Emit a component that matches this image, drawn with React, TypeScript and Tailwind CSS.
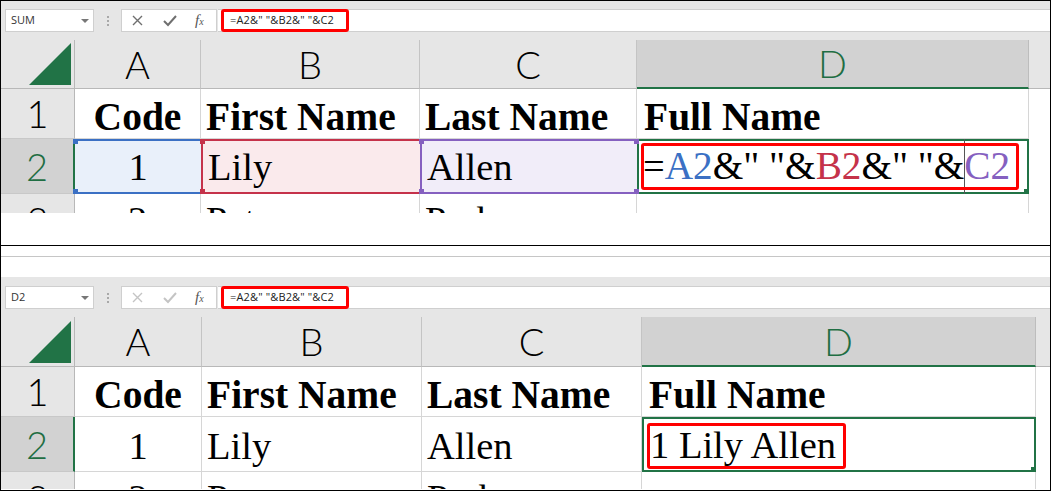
import React from "react";

const SERIF = "font-['Liberation_Serif',serif]";

function Handle({ pos, color }: { pos: string; color: string }) {
  return <span className={`absolute w-[5px] h-[5px] z-20 ${pos} ${color}`} />;
}

function Toolbar({ name, active, strip }: { name: string; active: boolean; strip: string }) {
  const stroke = active ? "#6f6f6f" : "#c4c4c4";
  return (
    <div className={`bg-[#e6e6e6] flex items-start pl-[4px] ${strip}`}>
      <div className="flex items-center justify-between w-[89px] h-[23px] bg-white border border-[#cfcfcf] pl-[5px] pr-[4px] text-[11px] text-[#333] font-['Open_Sans',sans-serif]">
        <span>{name}</span>
        <span className="w-0 h-0 border-x-[4px] border-x-transparent border-t-[4px] border-t-[#777]" />
      </div>
      <div className="w-[27px] h-[23px] flex flex-col items-center justify-center gap-[2px]">
        <span className="w-[2px] h-[2px] bg-[#a8a8a8]" />
        <span className="w-[2px] h-[2px] bg-[#a8a8a8]" />
        <span className="w-[2px] h-[2px] bg-[#a8a8a8]" />
      </div>
      <div className="flex items-center w-[96px] h-[23px] bg-white border border-[#cfcfcf]">
        <svg width="73" height="21" viewBox="0 0 73 21" fill="none" className="shrink-0">
          <path d="M11 6 L20 15 M20 6 L11 15" stroke={stroke} strokeWidth="1.4" />
          <path d="M42 11 L46 15 L54 6" stroke={stroke} strokeWidth="2" />
        </svg>
        <span className={`${SERIF} italic text-[15px] text-[#555]`}>
          f<span className="text-[10px]">x</span>
        </span>
      </div>
      <div className="flex-1 h-[23px] bg-white border-y border-[#cfcfcf] ml-[1px] pl-[3px]">
        <div className="w-[128px] h-[23px] -mt-[1px] border-[3px] border-[#ff0000] rounded-[3px] flex items-center pl-[6px] text-[11px] tracking-[0.15px] text-[#222] font-['Open_Sans',sans-serif] whitespace-pre">
          {'=A2&" "&B2&" "&C2'}
        </div>
      </div>
    </div>
  );
}

function Head({ label, selected }: { label: string; selected?: boolean }) {
  return (
    <div
      className={`flex items-center justify-center border-b border-[#b8b8b8] border-r font-['Lato',sans-serif] font-light text-[38px] ${
        selected
          ? "bg-[#d2d2d2] text-[#1f6e43] border-r-[#bdbdbd] border-b-2 border-b-[#217346]"
          : "bg-[#e6e6e6] text-black border-r-[#c4c4c4]"
      }`}
    >
      {label}
    </div>
  );
}

function RowHead({ label, selected }: { label: string; selected?: boolean }) {
  return (
    <div
      className={`flex items-center justify-center font-['Lato',sans-serif] font-light text-[38px] border-b border-[#c8c8c8] ${
        selected
          ? "bg-[#d2d2d2] text-[#1f6e43] border-r-2 border-r-[#217346]"
          : "bg-[#e6e6e6] text-black border-r border-r-[#b8b8b8]"
      }`}
    >
      {label}
    </div>
  );
}

function Cell({
  children,
  center,
  bold,
  extra = "border-r border-b border-[#d6d6d6]",
}: {
  children?: React.ReactNode;
  center?: boolean;
  bold?: boolean;
  extra?: string;
}) {
  return (
    <div
      className={`relative flex items-center ${center ? "justify-center" : "pl-[5px]"} ${SERIF} text-black whitespace-pre ${
        bold ? "font-bold text-[39.5px] pt-[8px]" : "text-[38.5px]"
      } ${extra}`}
    >
      {children}
    </div>
  );
}

function Sheet({ cols, rows, children }: { cols: string; rows: string; children: React.ReactNode }) {
  return <div className={`grid bg-white overflow-hidden ${cols} ${rows}`}>{children}</div>;
}

function Header() {
  return (
    <>
      <div className="bg-[#e6e6e6] border-b border-r border-b-[#b8b8b8] border-r-[#b8b8b8] flex items-center justify-end pr-[3px]">
        <svg width="42" height="42" viewBox="0 0 42 42">
          <path d="M0 42 L42 0 L42 42 Z" fill="#217346" />
        </svg>
      </div>
      <Head label="A" />
      <Head label="B" />
      <Head label="C" />
      <Head label="D" selected />
      <div className="bg-[#e6e6e6] border-b border-[#b8b8b8]" />
    </>
  );
}

function TitleRow() {
  return (
    <>
      <RowHead label="1" />
      <Cell center bold>Code</Cell>
      <Cell bold>First Name</Cell>
      <Cell bold>Last Name</Cell>
      <Cell bold><span className="ml-[2px]">Full Name</span></Cell>
      <Cell extra="" />
    </>
  );
}

function ClippedRow() {
  return (
    <>
      <div className="overflow-hidden bg-[#e6e6e6] border-r border-[#b8b8b8] flex justify-center font-['Lato',sans-serif] font-light text-[38px] leading-[52px] text-black">
        3
      </div>
      <Cell center extra="border-r border-[#d6d6d6] items-start overflow-hidden leading-[52px]">2</Cell>
      <Cell extra="border-r border-[#d6d6d6] items-start overflow-hidden leading-[52px]">Peter</Cell>
      <Cell extra="border-r border-[#d6d6d6] items-start overflow-hidden leading-[52px]">Parker</Cell>
      <Cell extra="border-r border-[#d6d6d6]" />
      <Cell extra="" />
    </>
  );
}

export default function App() {
  return (
    <div className="w-[1051px] h-[491px] bg-white border border-black overflow-hidden flex flex-col">
      {/* top panel */}
      <section className="h-[245px] border-b border-black shrink-0">
        <Toolbar name="SUM" active strip="h-[39px] pt-[8px]" />
        <Sheet
          cols="grid-cols-[74px_126px_219px_217px_392px_1fr]"
          rows="grid-rows-[49px_50px_55px_19px]"
        >
          <Header />
          <TitleRow />
          <RowHead label="2" selected />
          <Cell center extra="border-y-[2px] border-[#3b70c4] bg-[#e9f0fa] pt-[2px]">
            1
            <Handle pos="-left-[2px] -top-[2px]" color="bg-[#3b70c4]" />
            <Handle pos="-left-[2px] -bottom-[2px]" color="bg-[#3b70c4]" />
          </Cell>
          <Cell extra="border-y-[2px] border-l-[2px] border-[#c5324a] bg-[#faeaec] pt-[2px]">
            Lily
            <Handle pos="-left-[3px] -top-[2px]" color="bg-[#c5324a]" />
            <Handle pos="-left-[3px] -bottom-[2px]" color="bg-[#c5324a]" />
          </Cell>
          <Cell extra="border-y-[2px] border-l-[2px] border-[#8560c0] bg-[#f1edf9] pt-[2px]">
            Allen
            <Handle pos="-left-[3px] -top-[2px]" color="bg-[#8560c0]" />
            <Handle pos="-left-[3px] -bottom-[2px]" color="bg-[#8560c0]" />
            <Handle pos="-right-[2px] -top-[2px]" color="bg-[#8560c0]" />
            <Handle pos="-right-[2px] -bottom-[2px]" color="bg-[#8560c0]" />
          </Cell>
          <Cell extra="border-[2px] border-[#217346]">
            <span className="-ml-[1px]">=</span>
            <span className="text-[#3b70c4] text-[39.25px]">A2</span>
            <span className="text-[39.25px]">{'&" "&'}</span>
            <span className="text-[#c5324a] text-[39.25px]">B2</span>
            <span className="text-[39.25px]">{'&" "&'}</span>
            <span className="relative text-[#8560c0] text-[39.25px] before:absolute before:left-0 before:top-[2px] before:bottom-[2px] before:w-px before:bg-[#555]">
              C2
            </span>
            <span className="absolute left-[2px] top-[2px] w-[378px] h-[47px] border-[3px] border-[#ff0000] rounded-[3px]" />
            <Handle pos="-right-[2px] -bottom-[2px]" color="bg-[#217346]" />
          </Cell>
          <Cell extra="" />
          <ClippedRow />
        </Sheet>
      </section>

      {/* bottom panel */}
      <section className="flex-1 min-h-0">
        <div className="h-[10px] bg-white" />
        <div className="h-[21px] bg-white border-t border-[#c6c6c6]" />
        <Toolbar name="D2" active={false} strip="h-[40px] pt-[9px]" />
        <Sheet
          cols="grid-cols-[74px_127px_220px_220px_394px_1fr]"
          rows="grid-rows-[50px_50px_55px_17px]"
        >
          <Header />
          <TitleRow />
          <RowHead label="2" selected />
          <Cell center extra="border-r border-b border-[#d6d6d6] pt-[5px]">1</Cell>
          <Cell extra="border-r border-b border-[#d6d6d6] pt-[5px]">Lily</Cell>
          <Cell extra="border-r border-b border-[#d6d6d6] pt-[5px]">Allen</Cell>
          <Cell extra="border-[2px] border-[#217346] pt-[3px]">
            <span className="ml-[1px]">1 Lily Allen</span>
            <span className="absolute left-[3px] top-[4px] w-[199px] h-[46px] border-[3px] border-[#ff0000] rounded-[3px]" />
            <Handle pos="-right-[2px] -bottom-[2px]" color="bg-[#217346]" />
          </Cell>
          <Cell extra="" />
          <ClippedRow />
        </Sheet>
      </section>
    </div>
  );
}
